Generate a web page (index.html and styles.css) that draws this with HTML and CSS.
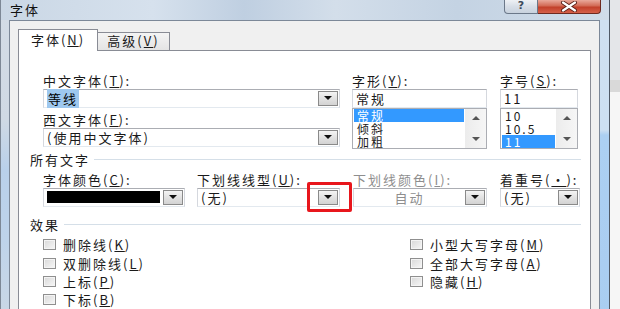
FILE: index.html
```html
<!DOCTYPE html>
<html>
<head>
    <title>字体</title>
    <link rel="stylesheet" href="styles.css">
</head>
<body>
    <div class="screen">
        <div class="window">
            <!-- Barra de título -->
            <div class="titlebar">
                <span class="title">字体</span>
                <div class="caption-buttons">
                    <div class="btn-help">?</div>
                    <div class="btn-close">
                        <svg width="20" height="11" viewBox="0 0 20 11">
                            <path d="M4 1.5 L16 9.5 M16 1.5 L4 9.5" stroke="#5a2018" stroke-width="4" stroke-linecap="round"/>
                            <path d="M4 1.5 L16 9.5 M16 1.5 L4 9.5" stroke="#ffffff" stroke-width="2.2" stroke-linecap="round"/>
                        </svg>
                    </div>
                </div>
            </div>

            <div class="frame-body">
                <div class="client">
                    <div class="tabs">
                        <div class="tab active">字体(<u>N</u>)</div>
                        <div class="tab">高级(<u>V</u>)</div>
                    </div>

                    <div class="panel">
                        <!-- Fontes, estilo e tamanho -->
                        <div class="row-top">
                            <div class="col col-font">
                                <div class="label">中文字体(<u>T</u>):</div>
                                <div class="combo">
                                    <span class="value"><span class="highlight">等线</span></span>
                                    <span class="drop"></span>
                                </div>
                                <div class="label second">西文字体(<u>F</u>):</div>
                                <div class="combo">
                                    <span class="value">(使用中文字体)</span>
                                    <span class="drop"></span>
                                </div>
                            </div>
                            <div class="col col-style">
                                <div class="label">字形(<u>Y</u>):</div>
                                <div class="textbox">常规</div>
                                <div class="listbox">
                                    <div class="items">
                                        <div class="item selected">常规</div>
                                        <div class="item">倾斜</div>
                                        <div class="item">加粗</div>
                                    </div>
                                    <div class="vscroll">
                                        <span class="arrow-up"></span>
                                        <span class="arrow-down"></span>
                                    </div>
                                </div>
                            </div>
                            <div class="col col-size">
                                <div class="label">字号(<u>S</u>):</div>
                                <div class="textbox">11</div>
                                <div class="listbox">
                                    <div class="items">
                                        <div class="item">10</div>
                                        <div class="item">10.5</div>
                                        <div class="item selected">11</div>
                                    </div>
                                    <div class="vscroll">
                                        <span class="arrow-up"></span>
                                        <span class="arrow-down"></span>
                                    </div>
                                </div>
                            </div>
                        </div>

                        <div class="group group-all">
                            <span>所有文字</span>
                            <i class="group-line"></i>
                        </div>

                        <div class="row-mid">
                            <div class="col col-color">
                                <div class="label">字体颜色(<u>C</u>):</div>
                                <div class="combo">
                                    <span class="swatch"></span>
                                    <span class="drop"></span>
                                </div>
                            </div>
                            <div class="col col-underline">
                                <div class="label">下划线线型(<u>U</u>):</div>
                                <div class="combo">
                                    <span class="value">(无)</span>
                                    <span class="drop"></span>
                                </div>
                                <div class="mark"></div>
                            </div>
                            <div class="col col-ucolor disabled">
                                <div class="label">下划线颜色(<u>I</u>):</div>
                                <div class="combo">
                                    <span class="value center">自动</span>
                                    <span class="drop"></span>
                                </div>
                            </div>
                            <div class="col col-emph">
                                <div class="label">着重号(<u>·</u>):</div>
                                <div class="combo">
                                    <span class="value">(无)</span>
                                    <span class="drop"></span>
                                </div>
                            </div>
                        </div>

                        <div class="group group-effects">
                            <span>效果</span>
                            <i class="group-line"></i>
                        </div>

                        <!-- Efeitos -->
                        <div class="effects">
                            <div class="check"><span class="box"></span>删除线(<u>K</u>)</div>
                            <div class="check"><span class="box"></span>小型大写字母(<u>M</u>)</div>
                            <div class="check"><span class="box"></span>双删除线(<u>L</u>)</div>
                            <div class="check"><span class="box"></span>全部大写字母(<u>A</u>)</div>
                            <div class="check"><span class="box"></span>上标(<u>P</u>)</div>
                            <div class="check"><span class="box"></span>隐藏(<u>H</u>)</div>
                            <div class="check"><span class="box"></span>下标(<u>B</u>)</div>
                        </div>
                    </div>
                </div>
                <div class="right-frame"></div>
            </div>
        </div>
        <div class="outside"></div>
    </div>
</body>
</html>
```

FILE: styles.css
```css
body {
    margin: 0;
    font-family: "Noto Sans CJK SC", "Noto Sans", sans-serif;
    font-size: 13px;
    letter-spacing: 2px;
    color: #1a1a1a;
    background: #f4f4f4;
    overflow: hidden;
}
u {
    text-decoration-thickness: 1px;
    text-underline-offset: 1px;
}
.screen {
    display: flex;
    height: 309px;
}
.window {
    width: 610px;
    height: 309px;
    box-sizing: border-box;
    border-left: 1px solid #7d8896;
    border-right: 1px solid #4f5966;
    background: linear-gradient(to bottom, #d3dce6 0, #cfd9e4 120px, #b9d0ea 170px, #bed3ea 240px, #c9d7e6 309px);
    display: flex;
    flex-direction: column;
}
.titlebar {
    height: 21px;
    display: flex;
    align-items: flex-start;
    padding-left: 9px;
    background: linear-gradient(to right, #cad7e5 0, #d6e1ed 25%, #bfcfe1 40%, #d3deea 55%, #c4d3e3 75%, #d0dce9 100%);
}
.title {
    margin-top: 3px;
    line-height: 14px;
    color: #111;
}
.caption-buttons {
    margin-left: auto;
    margin-right: 8px;
    display: flex;
}
.btn-help {
    width: 34px;
    height: 14px;
    box-sizing: border-box;
    border: 1px solid #6b7889;
    border-top: none;
    border-radius: 0 0 0 4px;
    background: linear-gradient(to bottom, #eef1f5, #d7dee7 50%, #c8d2de);
    color: #3c4a5c;
    font-family: "DejaVu Sans", sans-serif;
    font-size: 11px;
    font-weight: bold;
    letter-spacing: 0;
    line-height: 12px;
    text-align: center;
}
.btn-close {
    width: 63px;
    height: 14px;
    box-sizing: border-box;
    border: 1px solid #6e2a20;
    border-top: none;
    border-left: none;
    border-radius: 0 0 4px 0;
    background: linear-gradient(to bottom, #e9a99b, #d26a55 45%, #c2402a 55%, #d5604a);
    display: flex;
    justify-content: center;
    align-items: center;
}
.frame-body {
    flex: 1;
    display: flex;
    padding-left: 8px;
}
.client {
    width: 591px;
    box-sizing: border-box;
    border: 1px solid #7c8898;
    border-bottom: none;
    background: #f0f0f0;
    padding: 8px 8px 0 8px;
    display: flex;
    flex-direction: column;
}
.right-frame {
    width: 9px;
    background: linear-gradient(to bottom, #cfe0f1 0, #cde0f2 110px, #acd0f2 115px, #a9cdf1 309px);
}
.outside {
    flex: 1;
    background: linear-gradient(to bottom, #e4e6e9 0, #e4e6e9 80px, #d9d9d9 80px, #d9d9d9 92px, #f6f6f6 92px);
}

/* Abas */
.tabs {
    display: flex;
    align-items: flex-end;
    height: 21px;
}
.tab {
    box-sizing: border-box;
    border: 1px solid #898c95;
    border-bottom: none;
    height: 18px;
    width: 72px;
    line-height: 16px;
    text-align: center;
    background: linear-gradient(to bottom, #f4f4f4, #e4e4e4);
    border-left: none;
}
.tab.active {
    width: 80px;
    height: 22px;
    margin-bottom: -1px;
    line-height: 20px;
    background: #fff;
    border-left: 1px solid #898c95;
    position: relative;
    z-index: 1;
}
.panel {
    flex: 1;
    background: #fff;
    border: 1px solid #898c95;
    border-bottom: none;
    padding-top: 23px;
}

/* Campos */
.col {
    display: flex;
    flex-direction: column;
}
.label {
    height: 14px;
    line-height: 14px;
    margin-bottom: 1px;
    white-space: nowrap;
}
.label.second {
    margin-top: 5px;
}
.row-top {
    display: flex;
    padding-left: 24px;
    height: 74px;
}
.col-font { width: 297px; }
.col-style { width: 135px; margin-left: 12px; }
.col-size { width: 78px; margin-left: 13px; }

.combo, .textbox {
    height: 19px;
    box-sizing: border-box;
    border: 1px solid #abadb3;
    border-color: #abadb3 #d5d8de #e3e9ef #d5d8de;
    background: #fff;
    display: flex;
    align-items: center;
    white-space: nowrap;
}
.textbox {
    padding-left: 3px;
    line-height: 17px;
}
.value {
    padding-left: 3px;
    flex: 1;
}
.value.center {
    text-align: center;
    padding-left: 0;
}
.highlight {
    background: #9ec8ef;
    color: #000;
    padding: 0 1px;
}
.drop {
    width: 20px;
    height: 15px;
    box-sizing: border-box;
    margin-right: 1px;
    border: 1px solid #8a8a8a;
    background: linear-gradient(to bottom, #f4f4f4, #e2e2e2 50%, #d3d3d3);
    display: flex;
    justify-content: center;
    align-items: center;
}
.drop::after {
    content: "";
    border-left: 4px solid transparent;
    border-right: 4px solid transparent;
    border-top: 4px solid #111;
}
.listbox {
    height: 41px;
    box-sizing: border-box;
    border: 1px solid #abadb3;
    display: flex;
}
.items {
    flex: 1;
    padding: 0 1px;
}
.item {
    height: 13px;
    line-height: 13px;
    font-size: 12px;
    padding-left: 3px;
}
.item.selected {
    background: #3399ff;
    color: #fff;
}
.vscroll {
    width: 21px;
    background: linear-gradient(to right, #ececec, #f6f6f6);
    display: flex;
    flex-direction: column;
    justify-content: space-between;
    align-items: center;
    padding: 7px 0 7px;
}
.arrow-up {
    border-left: 4px solid transparent;
    border-right: 4px solid transparent;
    border-bottom: 4px solid #555;
}
.arrow-down {
    border-left: 4px solid transparent;
    border-right: 4px solid transparent;
    border-top: 4px solid #555;
}

/* Grupos */
.group {
    display: flex;
    align-items: center;
    height: 14px;
    line-height: 14px;
    padding-left: 11px;
    margin-right: 9px;
}
.group-all { margin-top: 5px; }
.group-effects { margin-top: 11px; }
.group-line {
    flex: 1;
    height: 1px;
    margin-left: 4px;
    background: #d5dfe8;
}
.row-mid {
    display: flex;
    padding-left: 24px;
    margin-top: 6px;
}
.col-color { width: 142px; }
.col-underline { width: 143px; margin-left: 12px; position: relative; }
.col-ucolor { width: 134px; margin-left: 13px; }
.col-emph { width: 80px; margin-left: 13px; }
.disabled .label,
.disabled .value {
    color: #8e8e8e;
}
.swatch {
    flex: 1;
    height: 12px;
    margin: 0 3px 0 3px;
    background: #000;
}
.mark {
    position: absolute;
    left: 110px;
    top: 9px;
    width: 45px;
    height: 30px;
    box-sizing: border-box;
    border: 3px solid #e8161c;
    border-radius: 2px;
}

/* Efeitos */
.effects {
    display: grid;
    grid-template-columns: 367px 1fr;
    grid-auto-rows: 18.3px;
    padding-left: 24px;
    margin-top: 4px;
}
.check {
    display: flex;
    align-items: center;
    white-space: nowrap;
}
.box {
    width: 13px;
    height: 11px;
    box-sizing: border-box;
    border: 1px solid #8f8f8f;
    background: linear-gradient(to bottom right, #d8d8d8, #f7f7f7);
    box-shadow: inset 0 0 0 1px #f4f4f4;
    margin-right: 7px;
}
```
